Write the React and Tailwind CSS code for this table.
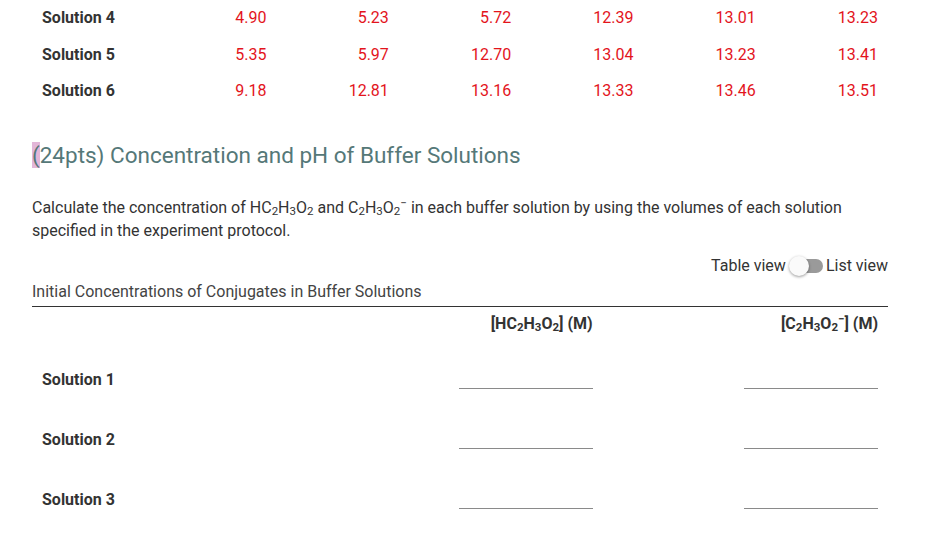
import React from 'react';

const topRows = [
    { name: 'Solution 4', vals: ['4.90', '5.23', '5.72', '12.39', '13.01', '13.23'] },
    { name: 'Solution 5', vals: ['5.35', '5.97', '12.70', '13.04', '13.23', '13.41'] },
    { name: 'Solution 6', vals: ['9.18', '12.81', '13.16', '13.33', '13.46', '13.51'] },
];

function Formula({ minus }) {
    return (
        <span>
            {minus ? '' : 'H'}C<sub className="text-[0.72em] leading-none">2</sub>H<sub className="text-[0.72em] leading-none">3</sub>O<sub className="text-[0.72em] leading-none">2</sub>
            {minus && <sup className="text-[0.72em] leading-none">−</sup>}
        </span>
    );
}

export default function App() {
    return (
        <div className="w-[936px] h-[533px] overflow-hidden bg-white text-[#333] font-['Roboto',sans-serif]">
            <div className="ml-[32px] w-[856px]">
                <div>
                    {topRows.map(row => (
                        <div key={row.name} className="grid grid-cols-7 h-[36.5px] items-center text-[16px]">
                            <div className="pl-[10px] font-bold text-[#333]">{row.name}</div>
                            {row.vals.map((v, i) => (
                                <div key={i} className="pr-[10px] text-right text-[#e3141c]">{v}</div>
                            ))}
                        </div>
                    ))}
                </div>

                <h2 className="mt-[30px] text-[22.5px] leading-[30px] text-[#557878] font-normal">
                    <span className="bg-[#e3b6d8]">(</span>24pts) Concentration and pH of Buffer Solutions
                </h2>

                <p className="mt-[26px] text-[16px] leading-[23px] text-[#333]">
                    Calculate the concentration of <Formula /> and <Formula minus /> in each buffer solution by using the volumes of each solution specified in the experiment protocol.
                </p>

                <div className="mt-[12px] flex justify-end items-center text-[16px] text-[#333]">
                    <span>Table view</span>
                    <div className="relative mx-[3px] w-[34px] h-[20px] flex items-center">
                        <div className="ml-[4px] w-[30px] h-[14px] rounded-full bg-[#9a9a9a]" />
                        <div className="absolute left-0 top-0 w-[20px] h-[20px] rounded-full bg-[#fafafa] shadow-[0_1px_3px_rgba(0,0,0,0.4)]" />
                    </div>
                    <span>List view</span>
                </div>

                <div className="mt-[4px] pb-[4px] text-[16px] leading-[20px] text-[#444] border-b border-[#333]">
                    Initial Concentrations of Conjugates in Buffer Solutions
                </div>

                <div className="grid grid-cols-3 h-[34px] items-center text-[16px] font-bold text-[#333]">
                    <div />
                    <div className="pr-[10px] text-right">[<Formula />] (M)</div>
                    <div className="pr-[10px] text-right">[<Formula minus />] (M)</div>
                </div>

                <div className="mt-[9px]">
                    {['Solution 1', 'Solution 2', 'Solution 3'].map(name => (
                        <div key={name} className="grid grid-cols-3 h-[60px] items-center text-[16px]">
                            <div className="pl-[10px] font-bold text-[#333]">{name}</div>
                            <div className="pr-[10px] flex justify-end">
                                <div className="mt-[17px] w-[134px] h-[1px] bg-[#8a8a8a]" />
                            </div>
                            <div className="pr-[10px] flex justify-end">
                                <div className="mt-[17px] w-[134px] h-[1px] bg-[#8a8a8a]" />
                            </div>
                        </div>
                    ))}
                </div>
            </div>
        </div>
    );
}
